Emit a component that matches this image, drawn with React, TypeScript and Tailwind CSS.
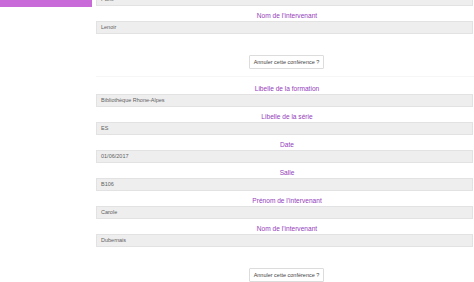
const fields = [
  { label: "Libelle de la formation", value: "Bibliothèque Rhone-Alpes" },
  { label: "Libelle de la série", value: "ES" },
  { label: "Date", value: "01/06/2017" },
  { label: "Salle", value: "B106" },
  { label: "Prénom de l'intervenant", value: "Carole" },
  { label: "Nom de l'intervenant", value: "Dubernais" },
];

function Field({ value }: { value: string }) {
  return (
    <div className="mr-px flex h-[13px] items-center border border-[#e2e2e2] bg-[#eeeeee] pl-[4px] text-[5.5px] text-[#5f5f5f]">
      {value}
    </div>
  );
}

function Label({ text, first }: { text: string; first?: boolean }) {
  return (
    <div
      className={
        first
          ? "h-[17px] pl-[4px] pt-[8px] text-center text-[6.6px] leading-[8px] text-[#9440bb]"
          : "h-[15px] pl-[4px] pt-[6px] text-center text-[6.6px] leading-[8px] text-[#9440bb]"
      }
    >
      {text}
    </div>
  );
}

function CancelButton() {
  return (
    <div className="mt-[21px] flex justify-center pl-[3px]">
      <button className="flex h-[14px] w-[75px] items-center justify-center rounded-[1px] border border-[#dcdcdc] bg-white text-[5.5px] text-[#444444]">
        Annuler cette conférence ?
      </button>
    </div>
  );
}

export default function App() {
  return (
    <div className="flex h-[282px] w-[474px] overflow-hidden bg-white font-['Liberation_Sans',Arial,sans-serif]">
      <aside className="w-[93px] shrink-0">
        <div className="h-[7px] w-[92px] bg-[#c86bd9]" />
      </aside>
      <main className="ml-[3px] flex flex-1 flex-col -mt-[7px]">
        <Field value="Paris" />
        <Label text="Nom de l'intervenant" />
        <Field value="Lenoir" />
        <CancelButton />
        <div className="mt-[7px] h-px bg-[#f6f6f6]" />
        {fields.map((f, i) => (
          <div key={f.label}>
            <Label text={f.label} first={i === 0} />
            <Field value={f.value} />
          </div>
        ))}
        <CancelButton />
      </main>
    </div>
  );
}
